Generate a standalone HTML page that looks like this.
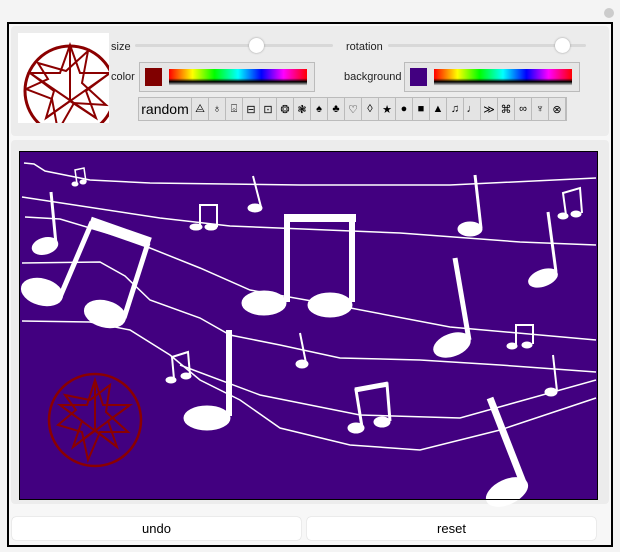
<!DOCTYPE html>
<html><head><style>
body{margin:0;width:620px;height:552px;background:#f4f4f4;font-family:"Liberation Sans",sans-serif;position:relative;overflow:hidden}
.abs{position:absolute}
.frame{left:7px;top:22px;width:602px;height:521px;border:2px solid #000;background:#f7f7f7}
.top{left:11px;top:26px;width:598px;height:110px;background:#ececec;border-radius:4px}
.lbl{font-size:11px;color:#222}
.track{height:3px;background:#d8d8d8;border-radius:2px}
.knob{width:15px;height:15px;border-radius:50%;background:#fff;box-shadow:0 0 2px #999}
.cbox{border:1px solid #bbb;background:#e6e6e6}
.grad{background:linear-gradient(to bottom,rgba(0,0,0,0),rgba(0,0,0,0) 55%,#000 75%,#fff),linear-gradient(to right,#f00,#ff0 17%,#0f0 33%,#0ff 50%,#00f 67%,#f0f 83%,#f00)}
.bar{left:138px;top:97px;height:22px;display:flex;border:1px solid #bbb;background:#e4e4e4}
.bar span{display:flex;align-items:center;justify-content:center;border-right:1px solid #bbb;font-size:11px;height:22px;width:16px;overflow:hidden}
.btn{top:517px;height:23px;background:#fff;border-radius:4px;box-shadow:0 0 1px #aaa;font-size:13px;text-align:center;line-height:23px}
</style></head><body>
<div class="abs" style="right:6px;top:8px;width:10px;height:10px;border-radius:50%;background:#ccc"></div>
<div class="abs frame"></div>
<div class="abs top"></div>
<div class="abs" style="left:11px;top:140px;width:598px;height:364px;background:#ececec;border-radius:4px"></div>
<div class="abs" style="left:18px;top:33px;width:91px;height:90px;background:#fff;overflow:hidden">
<svg width="91" height="90" viewBox="0 0 91 90"><g fill="none" stroke="#8b0000" stroke-width="2"><circle cx="52" cy="58" r="45" stroke-width="3"/><polygon points="52,12 62,40 92,40 68,58 78,85 52,68 28,85 36,58 12,40 42,40"/><polygon points="20,30 48,38 70,18 64,50 88,72 56,70 40,98 34,66 8,56 30,46"/><path d="M52,12 L52,68 M12,40 L78,85 M92,40 L28,85"/></g></svg></div>
<div class="abs lbl" style="left:111px;top:41px">size</div>
<div class="abs track" style="left:135px;top:44px;width:198px"></div>
<div class="abs knob" style="left:249px;top:38px"></div>
<div class="abs lbl" style="left:346px;top:41px">rotation</div>
<div class="abs track" style="left:388px;top:44px;width:198px"></div>
<div class="abs knob" style="left:555px;top:38px"></div>
<div class="abs lbl" style="left:111px;top:71px">color</div>
<div class="abs cbox" style="left:139px;top:62px;width:174px;height:28px"></div>
<div class="abs" style="left:145px;top:68px;width:17px;height:18px;background:#800000"></div>
<div class="abs grad" style="left:169px;top:69px;width:138px;height:17px"></div>
<div class="abs lbl" style="left:344px;top:71px">background</div>
<div class="abs cbox" style="left:404px;top:62px;width:174px;height:28px"></div>
<div class="abs" style="left:410px;top:68px;width:17px;height:18px;background:#420080"></div>
<div class="abs grad" style="left:434px;top:69px;width:138px;height:17px"></div>
<div class="abs bar"><span style="font-size:14px;width:52px">random</span><span>⨺</span><span>♁</span><span>⌺</span><span>⊟</span><span>⊡</span><span>❂</span><span>❃</span><span>♠</span><span>♣</span><span>♡</span><span>◊</span><span>★</span><span>●</span><span>■</span><span>▲</span><span>♫</span><span>♩</span><span>≫</span><span>⌘</span><span>∞</span><span>♆</span><span>⊗</span></div>
<svg class="abs" style="left:0;top:0" width="620" height="552">
<rect x="19.5" y="151.5" width="578" height="348" fill="#420080" stroke="#000"/>
<g fill="none" stroke="#fff" stroke-width="1.5">
<path d="M24,163 L34,164 L45,171 L90,180 L150,183 L300,185 L450,185 L596,178"/>
<path d="M22,197 L160,218 L230,226 L400,233 L520,242 L596,245"/>
<path d="M25,217 L60,219 L130,240 L200,268 L250,290 L340,306 L450,327 L596,340"/>
<path d="M22,263 L100,262 L125,276 L150,300 L200,318 L230,335 L280,345 L340,358 L420,360 L500,365 L596,372"/>
<path d="M22,321 L90,322 L130,330 L170,355 L200,380 L240,400 L280,428 L350,445 L420,450 L500,430 L596,398"/>
<path d="M180,365 L260,395 L360,415 L460,418 L596,380"/>
</g>
<g fill="#fff" stroke="#fff">
<ellipse cx="42" cy="292" rx="21" ry="13" transform="rotate(15 42 292)"/>
<ellipse cx="105" cy="314" rx="21" ry="13" transform="rotate(15 105 314)"/>
<path d="M60,297 L92,222 M124,318 L148,243" stroke-width="5"/>
<path d="M90,222 L150,243" stroke-width="11"/>
<ellipse cx="45" cy="246" rx="13" ry="8" transform="rotate(-15 45 246)"/><path d="M51,192 L56,244" stroke-width="3"/>
<ellipse cx="75" cy="184" rx="3" ry="2"/><ellipse cx="83" cy="182" rx="3" ry="2"/><path d="M77,184 L75,170 L84,168 L86,182" fill="none" stroke-width="1.5"/>
<ellipse cx="196" cy="227" rx="6" ry="3"/><ellipse cx="211" cy="227" rx="6" ry="3"/><path d="M200,227 V205 H217 V227" fill="none" stroke-width="2"/>
<ellipse cx="255" cy="208" rx="7" ry="4"/><path d="M253,176 L261,207" stroke-width="2"/>
<ellipse cx="264" cy="303" rx="22" ry="12"/><ellipse cx="330" cy="305" rx="22" ry="12"/>
<path d="M287,302 V218 H352 V302" fill="none" stroke-width="6"/><path d="M284,218 H356" stroke-width="8"/>
<ellipse cx="470" cy="229" rx="12" ry="7"/><path d="M475,175 L481,228" stroke-width="3"/>
<ellipse cx="563" cy="216" rx="5" ry="3"/><ellipse cx="576" cy="214" rx="5" ry="3"/><path d="M566,215 L563,193 L580,188 L582,213" fill="none" stroke-width="2"/>
<ellipse cx="543" cy="278" rx="15" ry="8" transform="rotate(-20 543 278)"/><path d="M548,212 L556,272" stroke-width="3"/>
<ellipse cx="452" cy="345" rx="19" ry="11" transform="rotate(-20 452 345)"/><path d="M455,258 L469,340" stroke-width="5"/>
<ellipse cx="512" cy="346" rx="5" ry="3"/><ellipse cx="527" cy="345" rx="5" ry="3"/><path d="M516,345 V325 H533 V344" fill="none" stroke-width="2"/>
<ellipse cx="551" cy="392" rx="6" ry="4"/><path d="M553,355 L557,391" stroke-width="2"/>
<ellipse cx="302" cy="364" rx="6" ry="4"/><path d="M300,333 L306,363" stroke-width="2"/>
<ellipse cx="171" cy="380" rx="5" ry="3"/><ellipse cx="186" cy="376" rx="5" ry="3"/><path d="M174,379 L172,357 L188,352 L190,375" fill="none" stroke-width="2"/>
<ellipse cx="207" cy="418" rx="23" ry="12"/><path d="M229,330 V416" stroke-width="6"/>
<ellipse cx="356" cy="428" rx="8" ry="5"/><ellipse cx="382" cy="422" rx="8" ry="5"/><path d="M362,427 L356,390 L387,384 L390,421" fill="none" stroke-width="3"/><path d="M355,390 L388,384" stroke-width="5"/>
<path d="M490,398 L524,485" stroke-width="7"/><ellipse cx="507" cy="492" rx="22" ry="12" transform="rotate(-25 507 492)"/>
</g>
<g fill="none" stroke="#8b0000" stroke-width="2">
<circle cx="95" cy="420" r="46" stroke-width="2.5"/>
<polygon points="95,380 103,405 130,405 108,421 117,447 95,430 73,447 82,421 60,405 87,405"/>
<polygon points="65,395 90,400 110,385 106,412 128,432 100,432 88,460 82,432 58,425 76,410"/>
<path d="M95,380 L95,430 M60,405 L117,447 M130,405 L73,447"/>
</g>
<rect x="19.5" y="151.5" width="578" height="348" fill="none" stroke="#000"/>
</svg>
<div class="abs btn" style="left:12px;width:289px">undo</div>
<div class="abs btn" style="left:307px;width:289px">reset</div>
</body></html>
